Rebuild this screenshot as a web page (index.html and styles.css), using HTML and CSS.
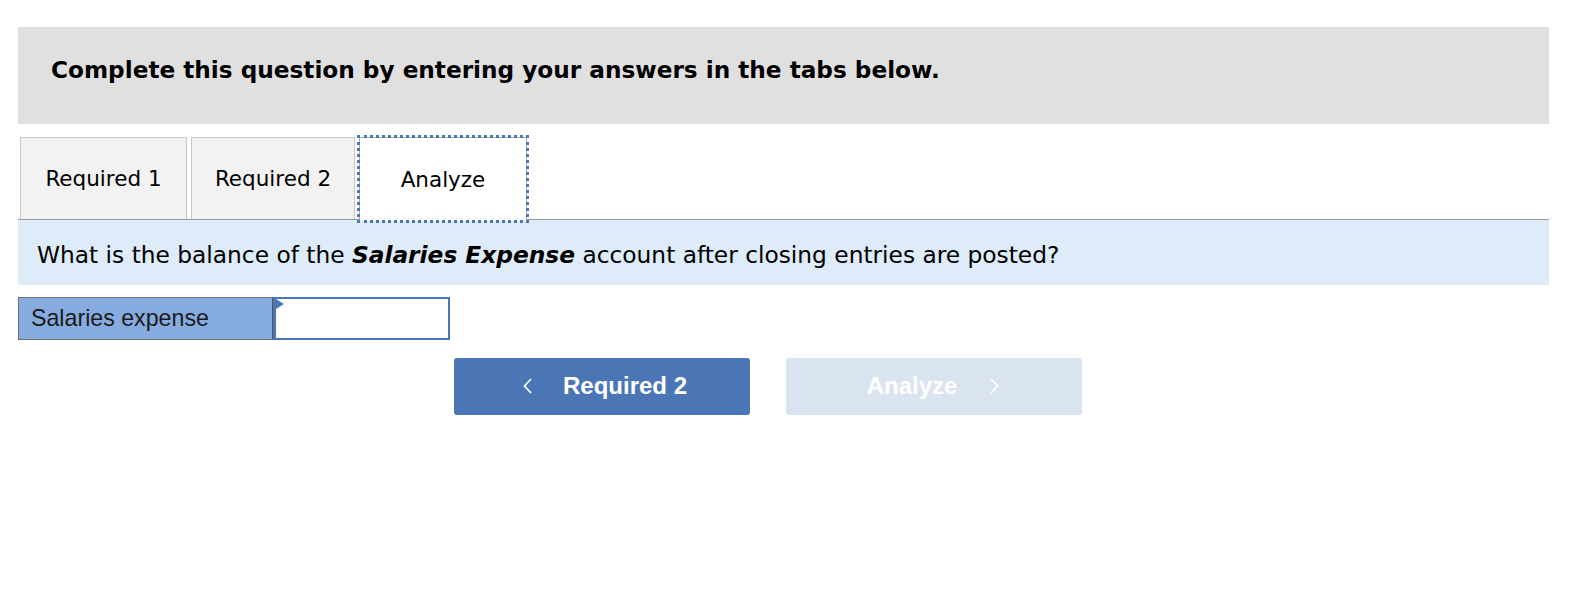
FILE: index.html
```html
<!DOCTYPE html>
<html>
<head>
<meta charset="utf-8">
<link rel="stylesheet" href="styles.css">
</head>
<body>
<div class="page">
  <div class="banner"><span>Complete this question by entering your answers in the tabs below.</span></div>
  <div class="tabs">
    <div class="tab">Required 1</div>
    <div class="tab">Required 2</div>
    <div class="tab active">Analyze</div>
  </div>
  <div class="question"><span>What is the balance of the <b><i>Salaries Expense</i></b> account after closing entries are posted?</span></div>
  <div class="row">
    <div class="label">Salaries expense</div>
    <div class="input"><span class="tri"></span></div>
  </div>
  <div class="nav">
    <div class="btn prev">
      <svg class="chev" width="11" height="16" viewBox="0 0 11 16"><path d="M9 1 L2.5 8 L9 15" fill="none" stroke="#fff" stroke-width="1.7"/></svg>
      <span>Required 2</span>
    </div>
    <div class="btn next">
      <span>Analyze</span>
      <svg class="chev" width="11" height="16" viewBox="0 0 11 16"><path d="M2 1 L8.5 8 L2 15" fill="none" stroke="#fff" stroke-width="1.7"/></svg>
    </div>
  </div>
</div>
</body>
</html>
```
FILE: styles.css
```css
html, body { margin: 0; padding: 0; background: #fff; }
body { padding: 27px 0 0 18px; }
.page { width: 1531px; }
.banner {
  background: #e0e0e0;
  height: 97px;
  box-sizing: border-box;
  padding: 29px 0 0 33px;
  font-family: "DejaVu Sans", Verdana, sans-serif;
  font-weight: bold;
  font-size: 23.2px;
  color: #000;
}
.tabs {
  margin-top: 13px;
  display: flex;
  align-items: flex-end;
  border-bottom: 1px solid #999;
  height: 83px;
  box-sizing: border-box;
}
.tab {
  height: 82px;
  box-sizing: border-box;
  border: 1px solid #c8c8c8;
  border-bottom: none;
  background: #f2f2f2;
  display: flex;
  align-items: center;
  justify-content: center;
  font-family: "DejaVu Sans", Verdana, sans-serif;
  font-size: 21.5px;
  color: #000;
  margin-right: 4px;
}
.tab:nth-child(1) { width: 167px; margin-left: 2px; }
.tab:nth-child(2) { width: 164px; }
.tab.active {
  width: 168px;
  margin-left: 0;
  background: #fff;
  border-color: #aaa;
  outline: 3px dotted #4a76c0;
  outline-offset: -1px;
  position: relative;
  z-index: 1;
  height: 84px;
  margin-bottom: -2px;
}
.question {
  background: #deebf8;
  height: 65px;
  box-sizing: border-box;
  padding: 3px 0 0 19px;
  display: flex;
  align-items: center;
  font-family: "DejaVu Sans", Verdana, sans-serif;
  font-size: 23.3px;
  color: #000;
}
.row {
  margin-top: 12px;
  display: flex;
  height: 43px;
}
.label {
  width: 255px;
  box-sizing: border-box;
  background: #86acdf;
  border: 1px solid #6f6f6f;
  border-right: 1px solid #555;
  padding-left: 12px;
  display: flex;
  align-items: center;
  font-family: "Liberation Sans", Arial, sans-serif;
  font-size: 23.2px;
  color: #1a1a1a;
}
.input {
  width: 177px;
  box-sizing: border-box;
  border: 2px solid #4a76b5;
  border-left-width: 3px;
  background: #fff;
  position: relative;
}
.tri {
  position: absolute;
  left: 0;
  top: 0;
  width: 0;
  height: 0;
  border-top: 5px solid transparent;
  border-bottom: 5px solid transparent;
  border-left: 8px solid #4a76b5;
}
.nav {
  margin-top: 18px;
  margin-left: 436px;
  display: flex;
  gap: 36px;
}
.btn {
  width: 296px;
  height: 57px;
  border-radius: 3px;
  display: flex;
  align-items: center;
  justify-content: center;
  box-sizing: border-box;
  padding-bottom: 1px;
  font-family: "Liberation Sans", Arial, sans-serif;
  font-weight: bold;
  font-size: 24px;
  color: #fff;
}
.prev { background: #4a76b5; gap: 30px; padding-left: 5px; }
.next { background: #dae3f0; gap: 32px; padding-right: 1px; }
.chev { display: block; }
```
